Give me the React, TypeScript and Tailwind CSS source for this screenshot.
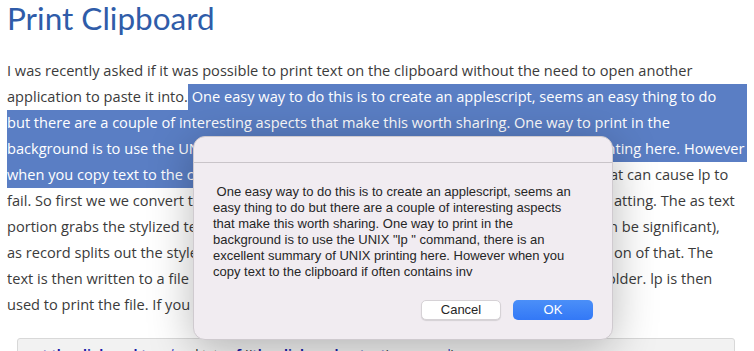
import type React from "react";

const sel = "bg-[#5a7ec4] text-white";

const Line: React.FC<{ children: React.ReactNode; className?: string }> = ({ children, className = "" }) => (
  <div className={`flex h-[26px] items-center whitespace-pre ${className}`}>{children}</div>
);

// lines partly hidden behind the dialog: the left part has a fixed width so the
// visible tail starts where it does in the page
const Split: React.FC<{ w: string; left: React.ReactNode; right: string }> = ({ w, left, right }) => (
  <Line>
    <span className={`flex h-full items-center overflow-hidden ${w}`}>{left}</span>
    <span>{right}</span>
  </Line>
);

const dialogLines = [
  " One easy way to do this is to create an applescript, seems an",
  "easy thing to do but there are a couple of interesting aspects",
  "that make this worth sharing. One way to print in the",
  "background is to use the UNIX \"lp \" command, there is an",
  "excellent summary of UNIX printing here. However when you",
  "copy text to the clipboard if often contains inv",
];

export default function App() {
  return (
    <div className="relative h-[351px] w-[754px] overflow-hidden bg-white">
      <div className="px-[7px]">
        <h1 className="font-['Lato'] text-[31.5px] font-normal leading-[36px] text-[#2f5ca9]">Print Clipboard</h1>

        <div className="mt-[22px] font-['Open_Sans'] text-[14.6px] text-[#3b3b3b]">
          <Line>I was recently asked if it was possible to print text on the clipboard without the need to open another</Line>
          <Line>
            <span>application to paste it into.</span>
            <span className={`flex h-full flex-1 items-center ${sel}`}> One easy way to do this is to create an applescript, seems an easy thing to do</span>
          </Line>
          <Line className={sel}>but there are a couple of interesting aspects that make this worth sharing. One way to print in the</Line>
          <Line className={sel}>background is to use the UNIX "lp " command, there is an excellent summary of UNIX printing here. However</Line>
          <Split
            w="w-[603px]"
            left={
              <>
                <span className={`flex h-full items-center ${sel}`}>when you copy text to the clipboard if often contains inv</span>
                <span>isible formatting th</span>
              </>
            }
            right="at can cause lp to"
          />
          <Split w="w-[607px]" left="fail. So first we we convert the clipboard to plain text to remove the form" right="atting. The as text" />
          <Split w="w-[602px]" left="portion grabs the stylized text (the styling information ca" right="n be significant)," />
          <Split w="w-[607px]" left="as record splits out the styled text and we take the plain text porti" right="on of that. The" />
          <Split w="w-[600px]" left="text is then written to a file in the temporary items fo" right="older. lp is then" />
          <Line>used to print the file. If you want to see what happens</Line>
        </div>

        <div className="ml-[10px] mr-[12px] mt-[20px] h-[40px] rounded-[3px] border border-[#d8d8d8] bg-[#f2f2f2] px-[10px] pt-[6px] font-['Open_Sans'] text-[13px] whitespace-pre">
          <span className="font-bold text-[#1a1aa6]">set the clipboard to </span>
          <span className="italic text-[#3030c0]">«class</span>
          <span className="text-[#222]"> ktxt» </span>
          <span className="font-bold text-[#1a1aa6]">of</span>
          <span className="text-[#222]"> ((</span>
          <span className="font-bold text-[#1a1aa6]">the clipboard as text</span>
          <span className="text-[#222]">) </span>
          <span className="font-bold text-[#1a1aa6]">as</span>
          <span className="text-[#3030c0] underline"> record</span>
          <span className="text-[#222]">)</span>
        </div>
      </div>

      <div className="absolute left-[193px] top-[136px] flex h-[204px] w-[420px] flex-col rounded-[12px] border border-[#cfcacf] bg-[#f1ecf1] shadow-[0_8px_45px_rgba(0,0,0,0.28)] font-['Liberation_Sans'] text-[13px] text-[#262626]">
        <div className="h-[26px] border-b border-[#c9c4c9]" />
        <div className="pl-[19px] pt-[21px] leading-[16px]">
          {dialogLines.map((l, i) => (
            <div key={i} className="whitespace-pre">{l}</div>
          ))}
        </div>
        <div className="mt-auto flex justify-end gap-[12px] pb-[19px] pr-[19px]">
          <button className="h-[20px] w-[80px] rounded-[5px] border border-[#d6d2d6] bg-white text-[13px] leading-[18px] text-[#262626] shadow-[0_1px_1px_rgba(0,0,0,0.12)]">Cancel</button>
          <button className="h-[20px] w-[80px] rounded-[5px] bg-gradient-to-b from-[#4b8ff8] to-[#3378f6] text-[13px] leading-[20px] text-white">OK</button>
        </div>
      </div>
    </div>
  );
}
